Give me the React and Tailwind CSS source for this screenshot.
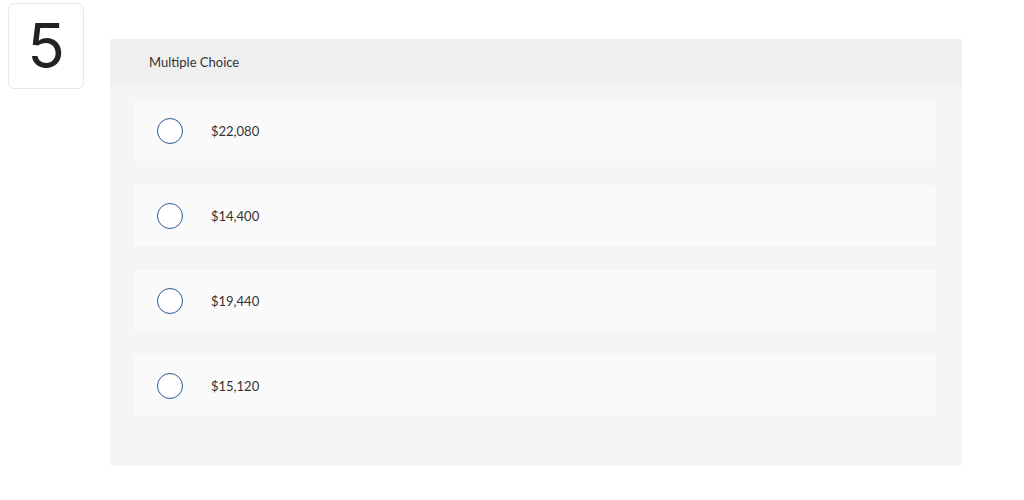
const options = ["$22,080", "$14,400", "$19,440", "$15,120"];

function Radio() {
  return (
    <span className="w-[26px] h-[26px] shrink-0 rounded-full border-[1.5px] border-[#2a5b92] bg-white" />
  );
}

export default function App() {
  return (
    <div className="w-[1024px] h-[500px] bg-white flex items-start font-['Lato',sans-serif] text-[#333]">
      <div className="ml-[8px] mt-[3px] w-[76px] h-[86px] rounded-md border border-[#e8e8e8] flex items-center justify-center">
        <span className="text-[62px] leading-none text-[#222] font-['Inter',sans-serif] font-normal">5</span>
      </div>
      <div className="ml-[26px] mt-[39px] w-[852px] h-[427px] rounded-[3px] bg-[#f5f5f5] flex flex-col">
        <div className="h-[46px] bg-[#efefef] rounded-t-[3px] flex items-center pl-[39px]">
          <span className="mt-[2px] text-[13px] text-[#333]">Multiple Choice</span>
        </div>
        <div className="pl-[24px] pr-[26px] pt-[15px] flex flex-col gap-[24px]">
          {options.map((o) => (
            <div key={o} className="h-[61px] bg-[#fafafa] rounded-[2px] flex items-center pl-[23px]">
              <Radio />
              <span className="ml-[28px] mt-[2px] text-[13px] text-[#333]">{o}</span>
            </div>
          ))}
        </div>
      </div>
    </div>
  );
}
